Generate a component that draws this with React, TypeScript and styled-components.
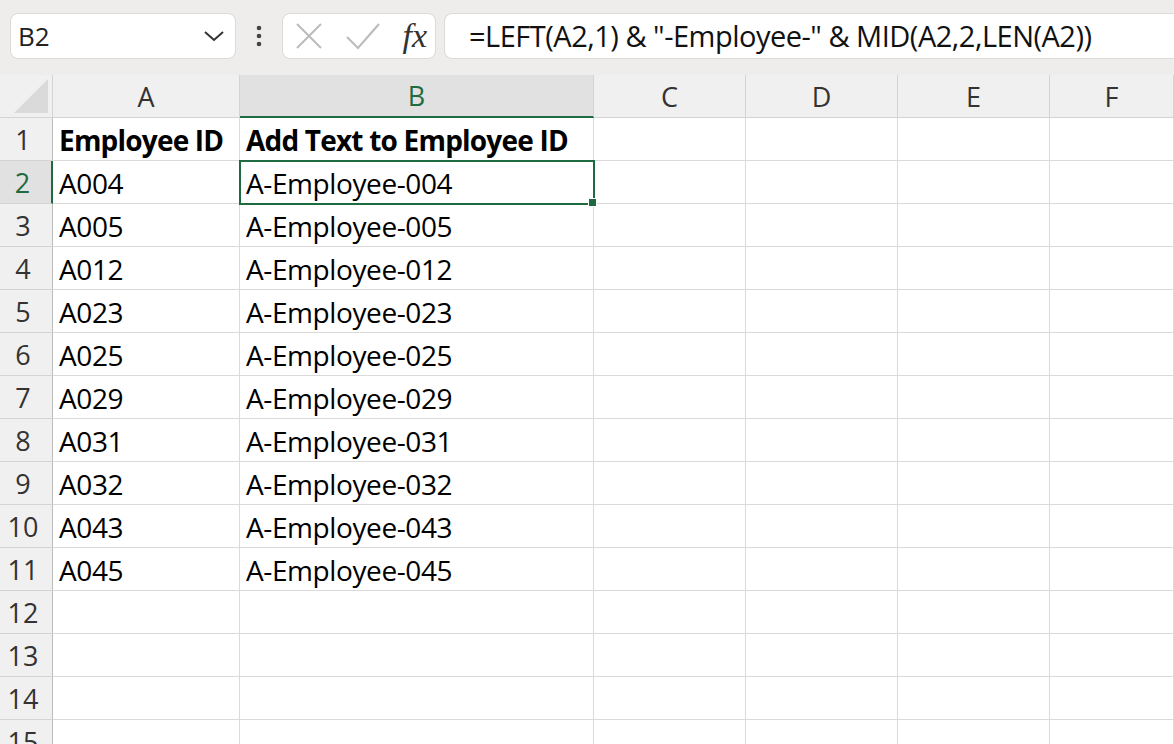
import React from "react";
import styled, { createGlobalStyle } from "styled-components";

const Global = createGlobalStyle`
  html, body { margin: 0; padding: 0; background: #fff; overflow: hidden; }
  * { box-sizing: border-box; }
`;

const Page = styled.div`
  width: 1174px; height: 744px; overflow: hidden;
  font-family: "Open Sans", "Noto Sans", sans-serif;
`;

const Toolbar = styled.div`
  height: 75px; background: #efedeb; display: flex; align-items: center;
  padding: 0 0 4px 10px; gap: 0;
`;

const NameBox = styled.div`
  width: 226px; height: 46px; background: #fff; border: 1px solid #dcdad8;
  border-radius: 8px; display: flex; align-items: center; justify-content: space-between;
  padding: 0 10px 0 7px; font-size: 26px; color: #222;
`;

const Dots = styled.div`
  width: 46px; display: flex; justify-content: center;
`;

const IconBox = styled.div`
  width: 154px; height: 46px; background: #fff; border: 1px solid #dcdad8;
  border-radius: 8px; display: flex; align-items: center; justify-content: space-between;
  padding: 0 8px 0 12px;
`;

const Fx = styled.span`
  font-family: "Liberation Serif", serif; font-style: italic; font-size: 34px; color: #333;
`;

const FormulaBox = styled.div`
  flex: 1; margin-left: 8px; height: 46px; background: #fff; border: 1px solid #dcdad8;
  border-right: none; border-radius: 8px 0 0 8px; display: flex; align-items: center;
  padding-left: 24px; font-size: 29px; letter-spacing: -0.5px; color: #111; white-space: nowrap;
`;

const Grid = styled.div`
  display: grid;
  grid-template-columns: 53px 187px 354px 152px 152px 152px 124px;
  grid-auto-rows: 43px;
`;

const Corner = styled.div`
  background: #f0f0f0; border-right: 1px solid #d4d4d4; border-bottom: 1px solid #d4d4d4;
  position: relative;
  &::after {
    content: ""; position: absolute; right: 4px; bottom: 4px; width: 0; height: 0;
    border-left: 34px solid transparent; border-bottom: 34px solid #dadada;
  }
`;

const ColHead = styled.div<{ $sel?: boolean }>`
  background: ${p => (p.$sel ? "#e1e1e1" : "#f0f0f0")};
  color: ${p => (p.$sel ? "#1e6b41" : "#333")};
  border-right: 1px solid #d4d4d4;
  border-bottom: ${p => (p.$sel ? "2px solid #1e6b41" : "1px solid #d4d4d4")};
  display: flex; align-items: center; justify-content: center; font-size: 27px;
`;

const RowHead = styled.div<{ $sel?: boolean }>`
  background: ${p => (p.$sel ? "#e1e1e1" : "#f0f0f0")};
  color: ${p => (p.$sel ? "#1e6b41" : "#333")};
  border-right: ${p => (p.$sel ? "2px solid #1e6b41" : "1px solid #bdbdbd")};
  border-bottom: 1px solid #d4d4d4;
  display: flex; align-items: center; justify-content: center; font-size: 27px;
  padding-right: 6px;
`;

const Cell = styled.div<{ $bold?: boolean; $sel?: boolean }>`
  border-right: 1px solid #dadada; border-bottom: 1px solid #dadada;
  display: flex; align-items: center; padding: 2px 0 0 6px;
  font-size: 28px; color: #000; white-space: nowrap; overflow: visible;
  font-weight: ${p => (p.$bold ? 700 : 400)};
  letter-spacing: ${p => (p.$bold ? "-0.8px" : "-0.4px")};
  position: relative;
  ${p => p.$sel && `
    outline: 2px solid #1e6b41; outline-offset: -1px; z-index: 1;
    &::after { content: ""; position: absolute; right: -4px; bottom: -4px; width: 7px; height: 7px; background: #1e6b41; border: 1px solid #fff; }
  `}
`;

const ids = ["004", "005", "012", "023", "025", "029", "031", "032", "043", "045"];
const cols = ["A", "B", "C", "D", "E", "F"];

export default function App() {
  const rows: React.ReactNode[] = [];
  for (let r = 1; r <= 15; r++) {
    rows.push(<RowHead key={"h" + r} $sel={r === 2}>{r}</RowHead>);
    let a = "", b = "";
    if (r === 1) { a = "Employee ID"; b = "Add Text to Employee ID"; }
    else if (r <= 11) { a = "A" + ids[r - 2]; b = "A-Employee-" + ids[r - 2]; }
    rows.push(<Cell key={"a" + r} $bold={r === 1}>{a}</Cell>);
    rows.push(<Cell key={"b" + r} $bold={r === 1} $sel={r === 2}>{b}</Cell>);
    for (let c = 0; c < 4; c++) rows.push(<Cell key={r + "c" + c} />);
  }
  return (
    <Page>
      <Global />
      <Toolbar>
        <NameBox>
          B2
          <svg width="22" height="14" viewBox="0 0 22 14"><path d="M2 3l9 8 9-8" fill="none" stroke="#333" strokeWidth="2" /></svg>
        </NameBox>
        <Dots>
          <svg width="6" height="24" viewBox="0 0 6 24"><circle cx="3" cy="4" r="2.3" fill="#444" /><circle cx="3" cy="12" r="2.3" fill="#444" /><circle cx="3" cy="20" r="2.3" fill="#444" /></svg>
        </Dots>
        <IconBox>
          <svg width="28" height="28" viewBox="0 0 28 28"><path d="M2 2l24 24M26 2L2 26" stroke="#bbb" strokeWidth="2" /></svg>
          <svg width="36" height="28" viewBox="0 0 36 28"><path d="M2 15l11 11L34 2" fill="none" stroke="#bbb" strokeWidth="2" /></svg>
          <Fx>fx</Fx>
        </IconBox>
        <FormulaBox>=LEFT(A2,1) &amp; "-Employee-" &amp; MID(A2,2,LEN(A2))</FormulaBox>
      </Toolbar>
      <Grid>
        <Corner />
        {cols.map(c => <ColHead key={c} $sel={c === "B"}>{c}</ColHead>)}
        {rows}
      </Grid>
    </Page>
  );
}
